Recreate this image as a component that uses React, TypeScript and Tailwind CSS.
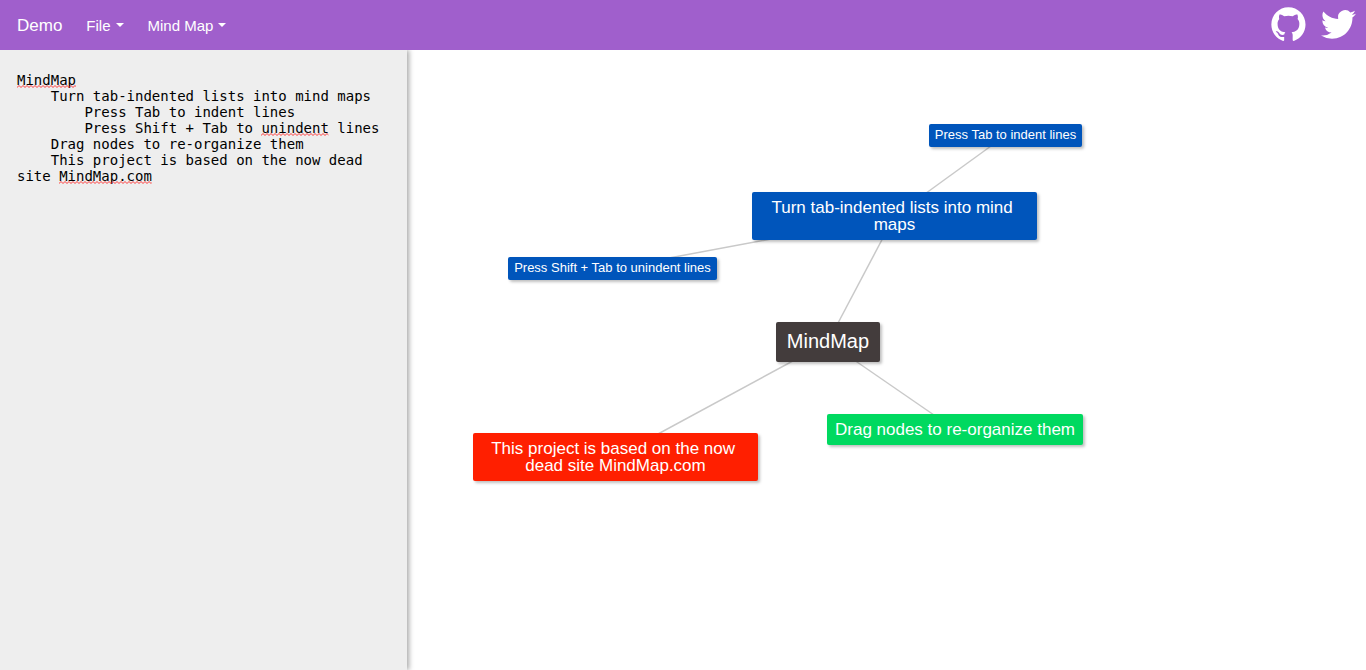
import { useState } from "react";

const OUTLINE =
  "MindMap\n" +
  "\tTurn tab-indented lists into mind maps\n" +
  "\t\tPress Tab to indent lines\n" +
  "\t\tPress Shift + Tab to unindent lines\n" +
  "\tDrag nodes to re-organize them\n" +
  "\tThis project is based on the now dead site MindMap.com";

const UNKNOWN_WORDS = /MindMap\.com|MindMap|unindent/g;
const COLUMNS = 44;
const TAB_SIZE = 4;

interface Mark {
  row: number;
  column: number;
  length: number;
}

/* Wraps the outline the way the editor does and locates the unknown words. */
function findMarks(text: string): Mark[] {
  const rows: string[] = [];
  for (const line of text.split("\n")) {
    let rest = line.replace(/\t/g, " ".repeat(TAB_SIZE));
    while (rest.length > COLUMNS) {
      const space = rest.lastIndexOf(" ", COLUMNS);
      const cut = space > 0 ? space + 1 : COLUMNS;
      rows.push(rest.slice(0, cut));
      rest = rest.slice(cut);
    }
    rows.push(rest);
  }
  return rows.flatMap((content, row) =>
    [...content.matchAll(UNKNOWN_WORDS)].map((m) => ({
      row,
      column: m.index ?? 0,
      length: m[0].length,
    })),
  );
}

type Level = "root" | "branch" | "leaf";

interface MapNode {
  id: string;
  parent?: string;
  label: string;
  level: Level;
  color: string;
  x: number;
  y: number;
  width: number;
  height: number;
}

const NODES: MapNode[] = [
  { id: "root", label: "MindMap", level: "root", color: "bg-[#433c3c]", x: 369, y: 272, width: 104, height: 40 },
  { id: "turn", parent: "root", label: "Turn tab-indented lists into mind \nmaps", level: "branch", color: "bg-[#0055bb]", x: 345, y: 142, width: 285, height: 48 },
  { id: "tab", parent: "turn", label: "Press Tab to indent lines", level: "leaf", color: "bg-[#0055bb]", x: 522, y: 74, width: 153, height: 23 },
  { id: "shift", parent: "turn", label: "Press Shift + Tab to unindent lines", level: "leaf", color: "bg-[#0055bb]", x: 101, y: 207, width: 209, height: 23 },
  { id: "drag", parent: "root", label: "Drag nodes to re-organize them", level: "branch", color: "bg-[#00d960]", x: 420, y: 364, width: 256, height: 31 },
  { id: "based", parent: "root", label: "This project is based on the now \ndead site MindMap.com", level: "branch", color: "bg-[#ff1f00]", x: 66, y: 383, width: 285, height: 48 },
];

const LEVEL_CLASS: Record<Level, string> = {
  root: "text-[20px] leading-[20px] pb-[2px]",
  branch: "text-[17px] leading-[17px] pb-[1px]",
  leaf: "text-[13px] leading-[13px] pb-[2px]",
};

function Menu({ label }: { label: string }) {
  return (
    <button type="button" className="flex items-center gap-[5px] text-[15px] leading-5">
      {label}
      <svg width="8" height="4" viewBox="0 0 8 4" fill="currentColor" className="-mt-[2px]" aria-hidden="true">
        <path d="M0 0h8L4 4z" />
      </svg>
    </button>
  );
}

function Editor() {
  const [text, setText] = useState(OUTLINE);
  return (
    <aside className="relative z-10 flex w-[407px] shrink-0 bg-[#eeeeee] font-['DejaVu_Sans_Mono',monospace] text-[14px] leading-4 shadow-[2px_0_5px_rgba(0,0,0,0.35)]">
      <textarea
        aria-label="Outline"
        spellCheck={false}
        value={text}
        onChange={(e) => setText(e.target.value)}
        className="w-full resize-none overflow-hidden bg-transparent px-[17px] py-[22px] break-words whitespace-pre-wrap text-black outline-none [tab-size:4]"
      />
      {findMarks(text).map((m) => (
        <svg
          key={`${m.row}-${m.column}`}
          className="pointer-events-none absolute h-[3px]"
          style={{
            left: `calc(17px + ${m.column}ch)`,
            top: 35 + m.row * 16,
            width: `${m.length}ch`,
          }}
          aria-hidden="true"
        >
          <defs>
            <pattern id="squiggle" width="4" height="3" patternUnits="userSpaceOnUse">
              <path d="M-1 1.5L0 2.5L2 .5L4 2.5L5 1.5" fill="none" stroke="#ff2222" strokeWidth="0.9" />
            </pattern>
          </defs>
          <rect width="100%" height="3" fill="url(#squiggle)" />
        </svg>
      ))}
    </aside>
  );
}

function Canvas() {
  const byId = new Map(NODES.map((n) => [n.id, n]));
  return (
    <main className="relative min-w-0 flex-1 overflow-hidden bg-white">
      <svg className="absolute inset-0 h-full w-full" aria-hidden="true">
        {NODES.map((n) => {
          const p = n.parent ? byId.get(n.parent) : undefined;
          return p ? (
            <line
              key={n.id}
              x1={p.x + p.width / 2}
              y1={p.y + p.height / 2}
              x2={n.x + n.width / 2}
              y2={n.y + n.height / 2}
              stroke="#c9c9c9"
              strokeWidth="1.5"
            />
          ) : null;
        })}
      </svg>
      {NODES.map((n) => (
        <div
          key={n.id}
          className={`absolute flex cursor-move items-center justify-center rounded-[2px] text-center whitespace-pre text-white shadow-[2px_2px_3px_rgba(0,0,0,0.25)] ${n.color} ${LEVEL_CLASS[n.level]}`}
          style={{ left: n.x, top: n.y, width: n.width, height: n.height }}
        >
          {n.label}
        </div>
      ))}
    </main>
  );
}

export default function App() {
  return (
    <div className="flex min-h-screen flex-col font-['Liberation_Sans',Arial,sans-serif]">
      <nav className="relative z-20 flex h-[50px] shrink-0 items-center bg-[#a05fcc] pr-[10px] pl-[17px] text-white">
        <div className="flex items-center gap-6 pt-[2px]">
          <a href="#" className="text-[17px] leading-5">Demo</a>
          <Menu label="File" />
          <Menu label="Mind Map" />
        </div>
        <div className="ml-auto flex gap-[15px] pb-[1px]">
          <a href="#github" aria-label="GitHub">
            <svg width="35" height="35" viewBox="-1 -1 100 100" fill="currentColor" aria-hidden="true">
              <path d="M48.854 0C21.839 0 0 22 0 49.217c0 21.756 13.993 40.172 33.405 46.69 2.427.49 3.316-1.059 3.316-2.362 0-1.141-.08-5.052-.08-9.127-13.59 2.934-16.42-5.867-16.42-5.867-2.184-5.704-5.42-7.17-5.42-7.17-4.448-3.015.324-3.015.324-3.015 4.934.326 7.523 5.052 7.523 5.052 4.367 7.496 11.404 5.378 14.235 4.074.404-3.178 1.699-5.378 3.074-6.6-10.839-1.141-22.243-5.378-22.243-24.283 0-5.378 1.94-9.778 5.014-13.2-.485-1.222-2.184-6.275.486-13.038 0 0 4.125-1.304 13.426 5.052a46.97 46.97 0 0 1 12.214-1.63c4.125 0 8.33.571 12.213 1.63 9.302-6.356 13.427-5.052 13.427-5.052 2.67 6.763.97 11.816.485 13.038 3.155 3.422 5.015 7.822 5.015 13.2 0 18.905-11.404 23.06-22.324 24.283 1.78 1.548 3.316 4.481 3.316 9.126 0 6.6-.08 11.897-.08 13.526 0 1.304.89 2.853 3.316 2.364 19.412-6.52 33.405-24.935 33.405-46.691C97.707 22 75.788 0 48.854 0z" />
            </svg>
          </a>
          <a href="#twitter" aria-label="Twitter">
            <svg width="35" height="35" viewBox="0 0 24 24" fill="currentColor" aria-hidden="true">
              <path d="M23.953 4.57a10 10 0 01-2.825.775 4.958 4.958 0 002.163-2.723c-.951.555-2.005.959-3.127 1.184a4.92 4.92 0 00-8.384 4.482C7.69 8.095 4.067 6.13 1.64 3.162a4.822 4.822 0 00-.666 2.475c0 1.71.87 3.213 2.188 4.096a4.904 4.904 0 01-2.228-.616v.06a4.923 4.923 0 003.946 4.827 4.996 4.996 0 01-2.212.085 4.936 4.936 0 004.604 3.417 9.867 9.867 0 01-6.102 2.105c-.39 0-.779-.023-1.17-.067a13.995 13.995 0 007.557 2.209c9.053 0 13.998-7.496 13.998-13.985 0-.21 0-.42-.015-.63A9.935 9.935 0 0024 4.59z" />
            </svg>
          </a>
        </div>
      </nav>
      <div className="flex flex-1">
        <Editor />
        <Canvas />
      </div>
    </div>
  );
}
